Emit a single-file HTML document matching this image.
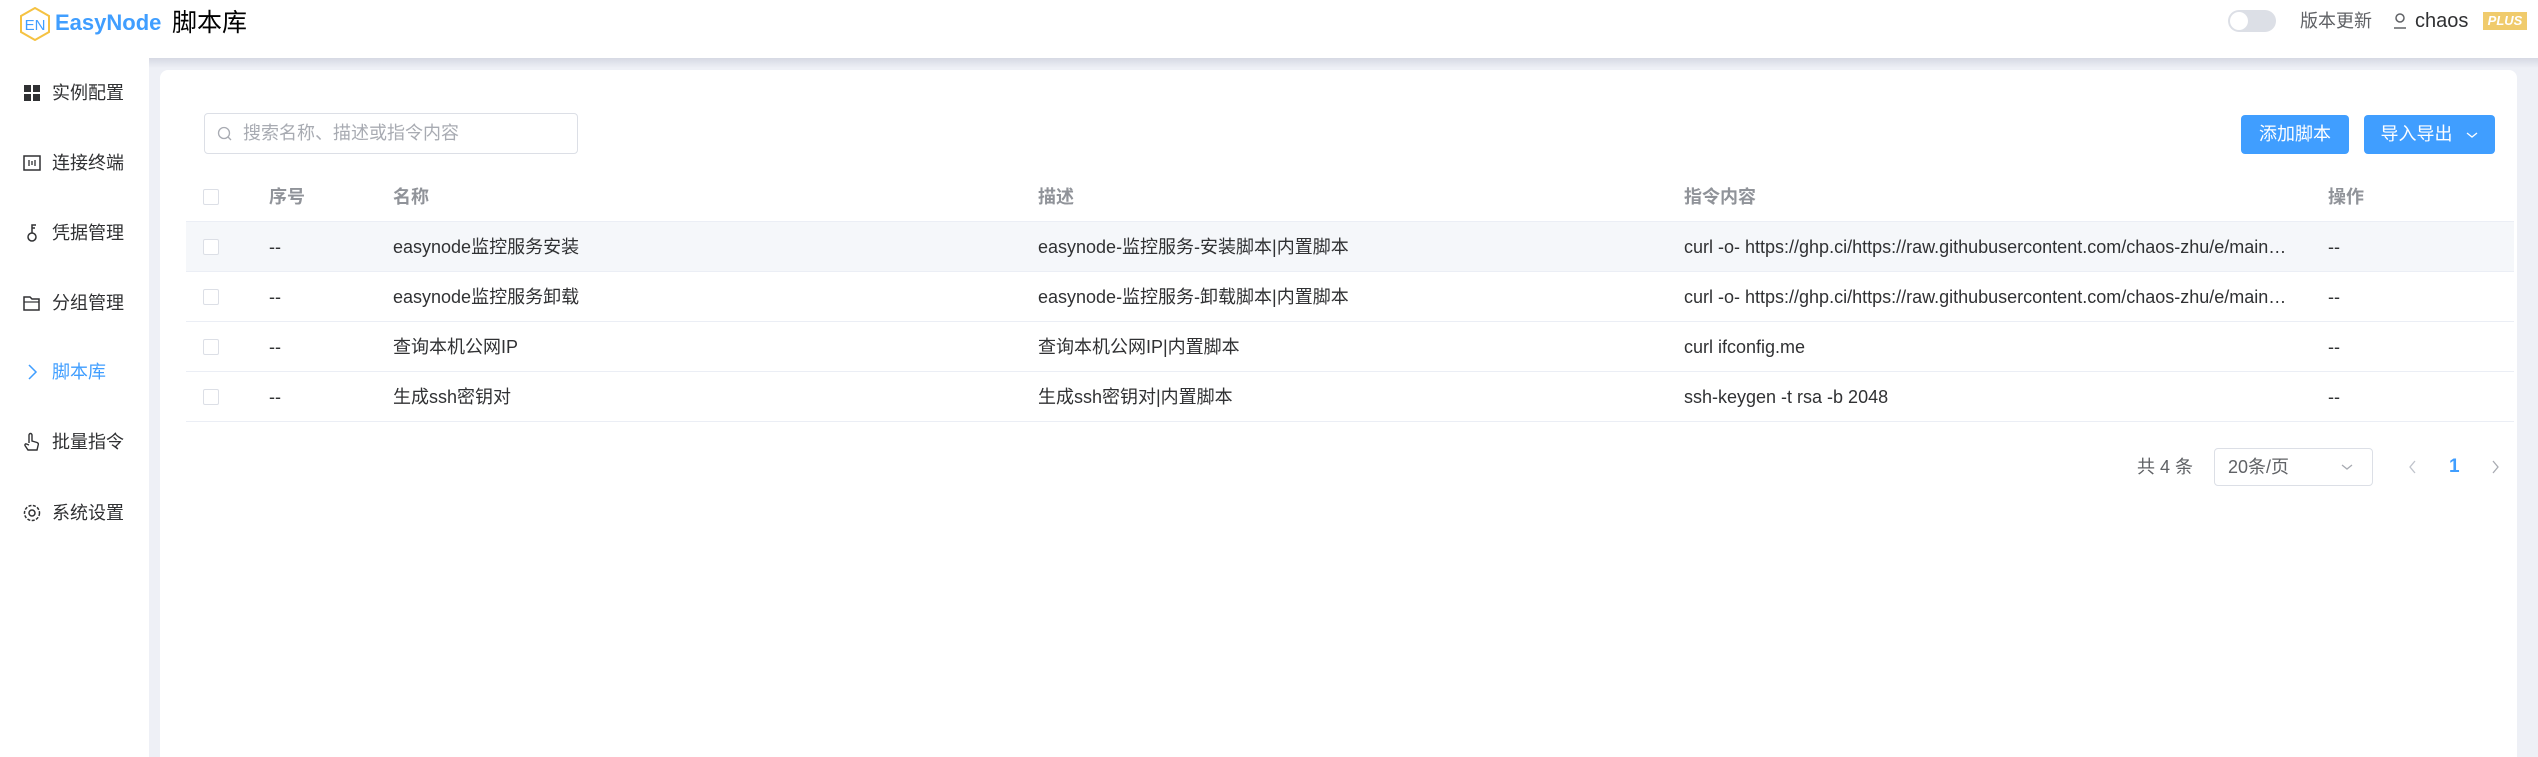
<!DOCTYPE html>
<html><head><meta charset="utf-8"><style>
*{box-sizing:border-box;margin:0;padding:0}
body{width:2538px;height:757px;overflow:hidden;background:#fff;font-family:"Liberation Sans","Noto Sans CJK SC",sans-serif;color:#303133;position:relative}
.abs{position:absolute;white-space:nowrap}
.gray{position:absolute;left:149px;top:58px;right:0;bottom:0;background:#eef0f6}
.band{position:absolute;left:149px;top:58px;right:0;height:10px;background:linear-gradient(#d6d9e3,#eef0f6)}
.card{position:absolute;left:160px;top:70px;width:2357px;bottom:0;background:#fff;border-radius:8px 8px 0 0}
.menu{position:absolute;left:22px;height:30px;line-height:30px;font-size:18px;color:#303133;display:flex;align-items:center;gap:10px}
.menu svg{width:20px;height:20px}
.th{position:absolute;top:173px;height:49px;line-height:49px;font-size:18px;font-weight:bold;color:#909399;white-space:nowrap}
.row{position:absolute;left:186px;width:2328px;height:50px;border-bottom:1px solid #ebeef5}
.td{position:absolute;height:50px;line-height:50px;font-size:18px;white-space:nowrap;color:#303133}
.cb{position:absolute;left:203px;width:16px;height:16px;border:1px solid #dcdfe6;border-radius:2px;background:#fff}
.btn{position:absolute;top:115px;height:39px;background:#409eff;color:#fff;border-radius:4px;font-size:18px;display:flex;align-items:center;justify-content:center;line-height:39px}
.l{line-height:40px;height:40px}
</style></head><body>
<!-- header -->
<svg class="abs" style="left:19px;top:7px" width="32" height="34" viewBox="0 0 32 34"><polygon points="16,1 30,9 30,25 16,33 2,25 2,9" fill="none" stroke="#f5c242" stroke-width="2"/><text x="16" y="23" text-anchor="middle" font-size="15" fill="#409eff" font-family="Liberation Sans">EN</text></svg>
<div class="abs l" style="left:55px;top:3px;font-size:22px;font-weight:bold;color:#409eff">EasyNode</div>
<div class="abs l" style="left:172px;top:3px;font-size:25px;color:#000">脚本库</div>
<div class="abs" style="left:2228px;top:10px;width:48px;height:22px;border-radius:11px;background:#dcdfe6"><div style="position:absolute;left:2px;top:2px;width:18px;height:18px;border-radius:9px;background:#fff"></div></div>
<div class="abs l" style="left:2300px;top:1px;font-size:18px;color:#606266">版本更新</div>
<svg class="abs" style="left:2392px;top:12px" width="16" height="18" viewBox="0 0 16 18"><circle cx="8" cy="6" r="4" fill="none" stroke="#606266" stroke-width="1.5"/><path d="M2 16h12" stroke="#606266" stroke-width="1.5"/></svg>
<div class="abs l" style="left:2415px;top:1px;font-size:20px;color:#303133">chaos</div>
<div class="abs" style="left:2483px;top:12px;width:44px;height:18px;background:#f0cb6c;color:#fff;font-size:13px;font-weight:bold;font-style:italic;text-align:center;line-height:18px">PLUS</div>
<!-- sidebar -->
<div class="menu" style="top:78px"><svg viewBox="0 0 20 20"><rect x="2" y="2" width="7" height="7" fill="#303133"/><rect x="11" y="2" width="7" height="7" fill="#303133"/><rect x="2" y="11" width="7" height="7" fill="#303133"/><rect x="11" y="11" width="7" height="7" fill="#303133"/></svg>实例配置</div>
<div class="menu" style="top:148px"><svg viewBox="0 0 20 20"><rect x="2" y="3" width="16" height="14" fill="none" stroke="#303133" stroke-width="1.5"/><path d="M7 7v6M10 8v4M13 7v6" stroke="#303133" stroke-width="1.3"/></svg>连接终端</div>
<div class="menu" style="top:218px"><svg viewBox="0 0 20 20"><circle cx="10" cy="14" r="4" fill="none" stroke="#303133" stroke-width="1.5"/><path d="M10 10V2h4M10 5h3" fill="none" stroke="#303133" stroke-width="1.5"/></svg>凭据管理</div>
<div class="menu" style="top:288px"><svg viewBox="0 0 20 20"><path d="M2 4h6l2 2h7v11H2z" fill="none" stroke="#303133" stroke-width="1.5"/><path d="M2 9h15" stroke="#303133" stroke-width="1.2"/></svg>分组管理</div>
<div class="menu" style="top:357px;color:#409eff"><svg viewBox="0 0 20 20"><path d="M7 3l7 7-7 7" fill="none" stroke="#409eff" stroke-width="1.5"/></svg>脚本库</div>
<div class="menu" style="top:427px"><svg viewBox="0 0 20 20"><path d="M7 11V3a1.5 1.5 0 013 0v6l5 1.5c1 .4 1.5 1 1.3 2L15 18H6l-3-4.5c-.5-1 .5-2 1.5-1.5L7 13" fill="none" stroke="#303133" stroke-width="1.4"/></svg>批量指令</div>
<div class="menu" style="top:498px"><svg viewBox="0 0 20 20"><circle cx="10" cy="10" r="3" fill="none" stroke="#303133" stroke-width="1.5"/><circle cx="10" cy="10" r="7.5" fill="none" stroke="#303133" stroke-width="1.5" stroke-dasharray="3 1.5"/></svg>系统设置</div>
<!-- content -->
<div class="gray"></div><div class="band"></div>
<div class="card"></div>
<div class="abs" style="left:204px;top:113px;width:374px;height:41px;border:1px solid #dcdfe6;border-radius:4px"></div>
<svg class="abs" style="left:217px;top:126px" width="16" height="16" viewBox="0 0 16 16"><circle cx="7" cy="7" r="5.5" fill="none" stroke="#a8abb2" stroke-width="1.3"/><path d="M11 11l3 3" stroke="#a8abb2" stroke-width="1.3"/></svg>
<div class="abs" style="left:243px;top:113px;height:41px;line-height:41px;font-size:18px;color:#a8abb2">搜索名称、描述或指令内容</div>
<div class="btn" style="left:2241px;width:108px">添加脚本</div>
<div class="btn" style="left:2364px;width:131px">导入导出 <svg style="margin-left:12px" width="14" height="10" viewBox="0 0 14 10"><path d="M2 3l5 4 5-4" fill="none" stroke="#fff" stroke-width="1.3"/></svg></div>
<!-- table -->
<div class="row" style="top:173px;height:49px"></div>
<div class="cb" style="top:189px"></div>
<div class="th" style="left:269px">序号</div><div class="th" style="left:393px">名称</div><div class="th" style="left:1038px">描述</div><div class="th" style="left:1684px">指令内容</div><div class="th" style="left:2328px">操作</div>
<div class="row" style="top:222px;background:#f5f7fa"></div>
<div class="row" style="top:272px"></div>
<div class="row" style="top:322px"></div>
<div class="row" style="top:372px"></div>
<div class="cb" style="top:239px"></div><div class="cb" style="top:289px"></div><div class="cb" style="top:339px"></div><div class="cb" style="top:389px"></div>
<div class="td" style="left:269px;top:222px">--</div><div class="td" style="left:393px;top:222px">easynode监控服务安装</div><div class="td" style="left:1038px;top:222px">easynode-监控服务-安装脚本|内置脚本</div><div class="td" style="left:1684px;top:222px;width:606px;overflow:hidden;text-overflow:ellipsis">curl -o- https://ghp.ci/https://raw.githubusercontent.com/chaos-zhu/e/main/script.sh</div><div class="td" style="left:2328px;top:222px">--</div>
<div class="td" style="left:269px;top:272px">--</div><div class="td" style="left:393px;top:272px">easynode监控服务卸载</div><div class="td" style="left:1038px;top:272px">easynode-监控服务-卸载脚本|内置脚本</div><div class="td" style="left:1684px;top:272px;width:606px;overflow:hidden;text-overflow:ellipsis">curl -o- https://ghp.ci/https://raw.githubusercontent.com/chaos-zhu/e/main/script.sh</div><div class="td" style="left:2328px;top:272px">--</div>
<div class="td" style="left:269px;top:322px">--</div><div class="td" style="left:393px;top:322px">查询本机公网IP</div><div class="td" style="left:1038px;top:322px">查询本机公网IP|内置脚本</div><div class="td" style="left:1684px;top:322px">curl ifconfig.me</div><div class="td" style="left:2328px;top:322px">--</div>
<div class="td" style="left:269px;top:372px">--</div><div class="td" style="left:393px;top:372px">生成ssh密钥对</div><div class="td" style="left:1038px;top:372px">生成ssh密钥对|内置脚本</div><div class="td" style="left:1684px;top:372px">ssh-keygen -t rsa -b 2048</div><div class="td" style="left:2328px;top:372px">--</div>
<!-- pagination -->
<div class="abs" style="left:2137px;top:448px;height:38px;line-height:38px;font-size:18px;color:#606266">共 4 条</div>
<div class="abs" style="left:2214px;top:448px;width:159px;height:38px;border:1px solid #dcdfe6;border-radius:4px"></div>
<div class="abs" style="left:2228px;top:448px;height:38px;line-height:38px;font-size:18px;color:#606266">20条/页</div>
<svg class="abs" style="left:2340px;top:462px" width="14" height="10" viewBox="0 0 14 10"><path d="M2 3l5 4 5-4" fill="none" stroke="#a8abb2" stroke-width="1.3"/></svg>
<svg class="abs" style="left:2408px;top:459px" width="10" height="16" viewBox="0 0 10 16"><path d="M7 2L2 8l5 6" fill="none" stroke="#c0c4cc" stroke-width="1.3"/></svg>
<div class="abs" style="left:2449px;top:448px;height:38px;line-height:38px;font-size:19px;font-weight:bold;color:#409eff">1</div>
<svg class="abs" style="left:2490px;top:459px" width="10" height="16" viewBox="0 0 10 16"><path d="M3 2l5 6-5 6" fill="none" stroke="#a8abb2" stroke-width="1.3"/></svg>
</body></html>
